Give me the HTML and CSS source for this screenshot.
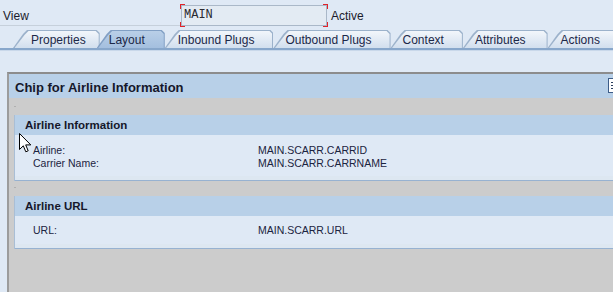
FILE: index.html
```html
<!DOCTYPE html>
<html>
<head>
<meta charset="utf-8">
<link rel="stylesheet" href="styles.css">
</head>
<body>
<div class="toprow">
  <div class="view-label">View</div>
  <div class="field"><div class="input">MAIN</div></div>
  <div class="status">Active</div>
</div>
<div class="tabs">
  <div class="tab t-prop">Properties</div>
  <div class="tab t-layout selected">Layout</div>
  <div class="tab t-in">Inbound Plugs</div>
  <div class="tab t-out">Outbound Plugs</div>
  <div class="tab t-ctx">Context</div>
  <div class="tab t-attr">Attributes</div>
  <div class="tab t-act">Actions</div>
</div>
<div class="panel">
  <div class="panel-head">
    <span class="panel-title">Chip for Airline Information</span>
    <svg class="list-icon" width="14" height="15" viewBox="0 0 14 15">
      <rect x="0.5" y="0.5" width="13" height="14" fill="#ffffff" stroke="#3d5d88"/>
      <line x1="3" y1="4.5" x2="12" y2="4.5" stroke="#2b3f5e"/>
      <line x1="3" y1="7.5" x2="12" y2="7.5" stroke="#2b3f5e"/>
      <line x1="3" y1="10.5" x2="12" y2="10.5" stroke="#2b3f5e"/>
    </svg>
  </div>
  <div class="panel-body">
    <div class="spacer s1"><span class="dot"></span></div>
    <div class="group">
      <div class="group-head">Airline Information</div>
      <div class="group-body g1">
        <div class="row"><span class="lbl">Airline:</span><span class="val">MAIN.SCARR.CARRID</span></div>
        <div class="row"><span class="lbl">Carrier Name:</span><span class="val">MAIN.SCARR.CARRNAME</span></div>
      </div>
    </div>
    <div class="spacer s2"><span class="dot"></span></div>
    <div class="group">
      <div class="group-head">Airline URL</div>
      <div class="group-body g2">
        <div class="row"><span class="lbl">URL:</span><span class="val">MAIN.SCARR.URL</span></div>
      </div>
    </div>
  </div>
</div>
<svg class="cursor" width="13" height="21" viewBox="0 0 13 21">
  <path d="M0.5 0.5 L0.5 16.5 L4.3 12.8 L6.8 18.8 L9.2 17.8 L6.7 11.9 L11.8 11.9 Z" fill="#ffffff" stroke="#000000" stroke-width="1" stroke-linejoin="miter"/>
</svg>
</body>
</html>
```
FILE: styles.css
```css
html, body {
  margin: 0;
  padding: 0;
}
body {
  background: #dfe9f5;
  font-family: "Liberation Sans", Arial, sans-serif;
  color: #1b2440;
  width: 613px;
  height: 292px;
  overflow: hidden;
  position: relative;
}
.toprow {
  display: flex;
  align-items: flex-start;
  height: 30px;
}
.view-label {
  box-sizing: border-box;
  width: 180px;
  height: 26px;
  padding: 10px 0 0 3px;
  line-height: 13px;
  font-size: 12px;
  color: #1b1b2b;
  border-bottom: 1px solid #c6d0db;
}
.field {
  margin-top: 4px;
  width: 148px;
  height: 23px;
  box-sizing: border-box;
  padding: 1px;
  background:
    linear-gradient(#e0242b, #e0242b) left top / 5px 1px no-repeat,
    linear-gradient(#e0242b, #e0242b) left top / 1px 5px no-repeat,
    linear-gradient(#e0242b, #e0242b) right top / 5px 1px no-repeat,
    linear-gradient(#e0242b, #e0242b) right top / 1px 5px no-repeat,
    linear-gradient(#e0242b, #e0242b) left bottom / 5px 1px no-repeat,
    linear-gradient(#e0242b, #e0242b) left bottom / 1px 5px no-repeat,
    linear-gradient(#e0242b, #e0242b) right bottom / 5px 1px no-repeat,
    linear-gradient(#e0242b, #e0242b) right bottom / 1px 5px no-repeat;
}
.input {
  box-sizing: border-box;
  height: 21px;
  border: 1px solid #aab8c8;
  background: #e3ebf3;
  font-family: "Liberation Mono", "Courier New", monospace;
  font-size: 12px;
  line-height: 19px;
  padding-left: 2px;
  color: #2a2a30;
}
.status {
  margin: 10px 0 0 3px;
  font-size: 12px;
  line-height: 13px;
  color: #1b1b2b;
}
.tabs {
  display: flex;
  height: 18px;
  padding-left: 13px;
  border-bottom: 2px solid #88a7cb;
  box-shadow: 0 1px 0 #c9d8ea;
}
.tab {
  position: relative;
  z-index: 0;
  isolation: isolate;
  height: 18px;
  box-sizing: border-box;
  padding-top: 3px;
  line-height: 15px;
  font-size: 12px;
  color: #1c2848;
  white-space: nowrap;
}
.tab::before,
.tab::after {
  content: "";
  position: absolute;
  z-index: -1;
  clip-path: polygon(0 100%, 10px 4px, 14px 0, calc(100% - 3px) 0, 100% 3px, 100% 100%);
}
.tab::before {
  inset: 0;
  background: #9cb2cb;
}
.tab::after {
  inset: 1px 1px 0 1.5px;
  background: linear-gradient(#f2f6fb, #d2dfee);
}
.tab.selected {
  z-index: 2;
}
.tab.selected::before {
  background: #819fc4;
}
.tab.selected::after {
  background: linear-gradient(#b9cfe7, #a4bfdf);
}
.t-prop { padding-left: 18px; padding-right: 14px; }
.t-layout { margin-left: -3px; padding-left: 12px; padding-right: 20px; }
.t-in { padding-left: 13px; padding-right: 19px; }
.t-out { padding-left: 12px; padding-right: 19px; }
.t-ctx { padding-left: 12px; padding-right: 19px; }
.t-attr { padding-left: 12px; padding-right: 22px; }
.t-act { padding-left: 13px; padding-right: 20px; }

.panel {
  margin: 22px 0 0 7px;
  width: 620px;
  height: 230px;
  box-sizing: border-box;
  border-top: 2px solid #8c8c8c;
  border-left: 2px solid #9c9c9c;
  background: #cccccc;
}
.panel-head {
  display: flex;
  align-items: flex-start;
  height: 24px;
  box-sizing: border-box;
  padding: 6px 5px 0 6px;
  background: #b8d0e8;
}
.panel-title {
  font-size: 13px;
  font-weight: bold;
  line-height: 15px;
  color: #15172a;
}
.list-icon {
  margin-left: auto;
  margin-top: -2px;
  display: block;
}
.panel-body {
  padding-left: 5px;
}
.spacer {
  box-sizing: border-box;
}
.s1 { height: 17px; padding-top: 8px; }
.s2 { height: 15px; padding-top: 6px; }
.dot {
  display: block;
  width: 2px;
  height: 1px;
  background: #b0b0b0;
}
.group {
  border-left: 1px solid #a9bed5;
}
.group-head {
  height: 20px;
  box-sizing: border-box;
  padding: 4px 0 0 10px;
  line-height: 13px;
  font-size: 11.5px;
  font-weight: bold;
  color: #15172a;
  background: #b8d0e8;
}
.group-body {
  background: #dfe9f5;
  border-bottom: 1px solid #97b2d1;
  box-shadow: inset 0 -4px 0 #dde7f1;
}
.g1 { padding: 9px 0 10px 18px; }
.g2 { padding: 8px 0 11px 18px; }
.row {
  display: grid;
  grid-template-columns: 225px 1fr;
  font-size: 10.5px;
  line-height: 13px;
  color: #1b2440;
}
.cursor {
  position: absolute;
  left: 19px;
  top: 133px;
}
```
